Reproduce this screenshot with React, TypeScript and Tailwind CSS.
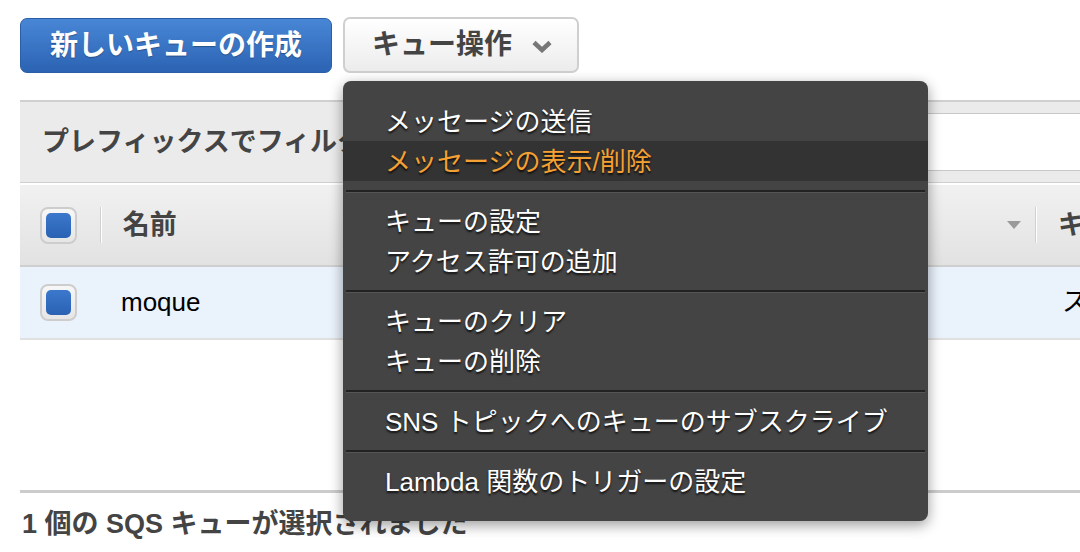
const jp = "font-['Liberation_Sans','Noto_Sans_CJK_JP',sans-serif]";

function Checkbox() {
  return (
    <div className="flex h-[37px] w-[37px] items-center justify-center rounded-[8px] border-2 border-[#cdcdcd] bg-gradient-to-b from-[#f7f7f7] to-[#e6e6e6]">
      <div className="h-[25px] w-[25px] rounded-[5px] bg-gradient-to-b from-[#3b78cc] to-[#2a62b3]" />
    </div>
  );
}

function Separator() {
  return (
    <div className="flex h-[20px] flex-col justify-center px-[3px]">
      <div className="h-[2px] bg-[#222222]" />
      <div className="h-px bg-[#555555]" />
    </div>
  );
}

function MenuItem({ label, active }: { label: string; active?: boolean }) {
  return (
    <div
      className={
        'flex h-[40px] items-center pl-[42px] pt-[3px] text-[26px] [text-shadow:0_2px_2px_rgba(0,0,0,0.75)] ' +
        (active ? 'bg-[#333333] text-[#f5a032]' : 'text-white')
      }
    >
      {label}
    </div>
  );
}

const groups: { label: string; active?: boolean }[][] = [
  [{ label: 'メッセージの送信' }, { label: 'メッセージの表示/削除', active: true }],
  [{ label: 'キューの設定' }, { label: 'アクセス許可の追加' }],
  [{ label: 'キューのクリア' }, { label: 'キューの削除' }],
  [{ label: 'SNS トピックへのキューのサブスクライブ' }],
  [{ label: 'Lambda 関数のトリガーの設定' }],
];

export default function App() {
  return (
    <div className={`relative h-[552px] w-[1080px] overflow-hidden bg-white ${jp}`}>
      {/* toolbar */}
      <div className="flex items-start gap-[11px] pl-5 pt-[17px]">
        <button className="mt-px flex h-[55px] w-[312px] items-center justify-center rounded-[7px] border border-[#2b5ea6] bg-gradient-to-b from-[#4887d6] to-[#2c63b3] text-[28px] font-bold text-white [text-shadow:0_1px_1px_rgba(0,0,0,0.3)]">
          新しいキューの作成
        </button>
        <button className="flex h-[56px] w-[236px] items-center rounded-[7px] border-2 border-[#cfcfcf] bg-gradient-to-b from-[#ffffff] to-[#ececec] pl-[27px] text-[28px] font-bold text-[#444444]">
          キュー操作
          <svg className="ml-[20px] mt-[2px]" width="20" height="13" viewBox="0 0 20 13">
            <path d="M2 2.5 L10 10 L18 2.5" fill="none" stroke="#777777" strokeWidth="4.5" strokeLinejoin="miter" />
          </svg>
        </button>
      </div>

      {/* queue table */}
      <div className="ml-5 mt-[27px] w-[1200px]">
        <div className="flex h-[83px] items-center border-t-2 border-b border-[#d0d0d0] bg-[#ebebeb] pl-[22px]">
          <span className="text-[27px] font-bold text-[#444444]">プレフィックスでフィルター:</span>
          <div className="ml-[20px] h-[58px] flex-1 border border-[#c8c8c8] bg-white" />
        </div>
        <div className="h-[2px] bg-white" />
        <div className="flex h-[82px] items-center border-b-2 border-[#cfcfcf] bg-gradient-to-b from-[#f1f1f1] to-[#e2e2e2]">
          <div className="flex w-[80px] items-center pl-[20px]">
            <Checkbox />
          </div>
          <div className="h-[36px] w-[2px] border-l border-[#d0d0d0] bg-white" />
          <div className="flex w-[937px] items-center pl-[21px] pr-[14px]">
            <span className="text-[27px] font-bold text-[#444444]">名前</span>
            <svg className="ml-auto" width="14" height="8" viewBox="0 0 14 8">
              <path d="M0 0 L14 0 L7 8 Z" fill="#9a9a9a" />
            </svg>
          </div>
          <div className="h-[36px] w-[2px] border-l border-[#d0d0d0] bg-white" />
          <div className="whitespace-nowrap pl-[21px] text-[27px] font-bold text-[#444444]">キュータイプ</div>
        </div>
        <div className="flex h-[73px] items-center border-b-2 border-[#e0e0e0] bg-[#eaf2fc]">
          <div className="flex w-[80px] items-center pl-[20px]">
            <Checkbox />
          </div>
          <div className="w-[941px] pl-[21px] text-[26px] text-black">moque</div>
          <div className="whitespace-nowrap pl-[21px] text-[26px] text-black">スタンダード</div>
        </div>
        <div className="mt-[150px] h-[3px] bg-[#cccccc]" />
        <div className="pt-[11px] pl-[2px] text-[27px] font-bold text-[#444444]">1 個の SQS キューが選択されました</div>
      </div>

      {/* actions dropdown */}
      <div className="absolute left-[343px] top-[81px] w-[585px] rounded-[8px] bg-[#444444] py-[20px] shadow-[0_4px_14px_rgba(0,0,0,0.4)]">
        {groups.map((g, i) => (
          <div key={i}>
            {i > 0 && <Separator />}
            {g.map((it) => (
              <MenuItem key={it.label} label={it.label} active={it.active} />
            ))}
          </div>
        ))}
      </div>
    </div>
  );
}
